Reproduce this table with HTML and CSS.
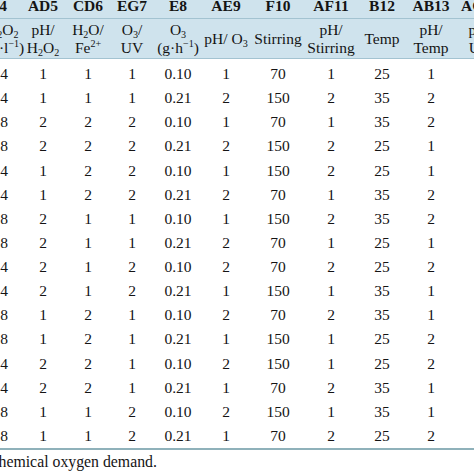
FILE: index.html
```html
<!DOCTYPE html>
<html>
<head>
<meta charset="utf-8">
<link rel="stylesheet" href="styles.css">
</head>
<body>
<table class="doe">
  <colgroup>
    <col class="w0"><col class="w1"><col class="w2"><col class="w3"><col class="w4"><col class="w5"><col class="w6"><col class="w7"><col class="w8"><col class="w9"><col class="w10">
  </colgroup>
  <thead>
    <tr class="r1">
      <th class="c0"><span class="e0">D4</span></th>
      <th>AD5</th><th>CD6</th><th>EG7</th><th>E8</th><th>AE9</th><th>F10</th><th>AF11</th><th>B12</th><th>AB13</th><th>AC14</th>
    </tr>
    <tr class="r2">
      <th class="c0"><span class="e1">H<sub>2</sub>O<sub>2</sub></span><span class="e2">(g·l<sup>−1</sup>)</span></th>
      <th>pH/<br>H<sub>2</sub>O<sub>2</sub></th>
      <th>H<sub>2</sub>O/<br>Fe<sup>2+</sup></th>
      <th>O<sub>3</sub>/<br>UV</th>
      <th>O<sub>3</sub><br>(g·h<sup>−1</sup>)</th>
      <th>pH/ O<sub>3</sub></th>
      <th>Stirring</th>
      <th>pH/<br>Stirring</th>
      <th>Temp</th>
      <th>pH/<br>Temp</th>
      <th>pH/<br>UV</th>
    </tr>
  </thead>
  <tbody>
    <tr><td class="c0">4</td><td>1</td><td>1</td><td>1</td><td>0.10</td><td>1</td><td>70</td><td>1</td><td>25</td><td>1</td><td></td></tr>
    <tr><td class="c0">4</td><td>1</td><td>1</td><td>1</td><td>0.21</td><td>2</td><td>150</td><td>2</td><td>35</td><td>2</td><td></td></tr>
    <tr><td class="c0">8</td><td>2</td><td>2</td><td>2</td><td>0.10</td><td>1</td><td>70</td><td>1</td><td>35</td><td>2</td><td></td></tr>
    <tr><td class="c0">8</td><td>2</td><td>2</td><td>2</td><td>0.21</td><td>2</td><td>150</td><td>2</td><td>25</td><td>1</td><td></td></tr>
    <tr><td class="c0">4</td><td>1</td><td>2</td><td>2</td><td>0.10</td><td>1</td><td>150</td><td>2</td><td>25</td><td>1</td><td></td></tr>
    <tr><td class="c0">4</td><td>1</td><td>2</td><td>2</td><td>0.21</td><td>2</td><td>70</td><td>1</td><td>35</td><td>2</td><td></td></tr>
    <tr><td class="c0">8</td><td>2</td><td>1</td><td>1</td><td>0.10</td><td>1</td><td>150</td><td>2</td><td>35</td><td>2</td><td></td></tr>
    <tr><td class="c0">8</td><td>2</td><td>1</td><td>1</td><td>0.21</td><td>2</td><td>70</td><td>1</td><td>25</td><td>1</td><td></td></tr>
    <tr><td class="c0">4</td><td>2</td><td>1</td><td>2</td><td>0.10</td><td>2</td><td>70</td><td>2</td><td>25</td><td>2</td><td></td></tr>
    <tr><td class="c0">4</td><td>2</td><td>1</td><td>2</td><td>0.21</td><td>1</td><td>150</td><td>1</td><td>35</td><td>1</td><td></td></tr>
    <tr><td class="c0">8</td><td>1</td><td>2</td><td>1</td><td>0.10</td><td>2</td><td>70</td><td>2</td><td>35</td><td>1</td><td></td></tr>
    <tr><td class="c0">8</td><td>1</td><td>2</td><td>1</td><td>0.21</td><td>1</td><td>150</td><td>1</td><td>25</td><td>2</td><td></td></tr>
    <tr><td class="c0">4</td><td>2</td><td>2</td><td>1</td><td>0.10</td><td>2</td><td>150</td><td>1</td><td>25</td><td>2</td><td></td></tr>
    <tr><td class="c0">4</td><td>2</td><td>2</td><td>1</td><td>0.21</td><td>1</td><td>70</td><td>2</td><td>35</td><td>1</td><td></td></tr>
    <tr><td class="c0">8</td><td>1</td><td>1</td><td>2</td><td>0.10</td><td>2</td><td>150</td><td>1</td><td>35</td><td>1</td><td></td></tr>
    <tr class="last"><td class="c0">8</td><td>1</td><td>1</td><td>2</td><td>0.21</td><td>1</td><td>70</td><td>2</td><td>25</td><td>2</td><td></td></tr>
  </tbody>
</table>
<div class="note">Chemical oxygen demand.</div>
</body>
</html>
```

FILE: styles.css
```css
html, body {
  margin: 0;
  padding: 0;
  overflow: hidden;
  background: #ffffff;
}
body {
  width: 474px;
  height: 474px;
  font-family: "Liberation Serif", "Times New Roman", serif;
  font-size: 15.5px;
  color: #141414;
}
.doe {
  border-collapse: separate;
  border-spacing: 0;
  table-layout: fixed;
  width: 521px;
  margin: -7px 0 0 -14px;
}
.w0 { width: 35px; }
.w1 { width: 44px; }
.w2 { width: 46px; }
.w3 { width: 42px; }
.w4 { width: 50px; }
.w5 { width: 46px; }
.w6 { width: 58px; }
.w7 { width: 48px; }
.w8 { width: 54px; }
.w9 { width: 44px; }
.w10 { width: 54px; }

.doe th, .doe td {
  padding: 0;
  text-align: center;
  vertical-align: middle;
  white-space: nowrap;
  line-height: 18px;
}
.doe thead th {
  background: #cfe3ed;
}
.doe .r1 th {
  height: 25px;
  font-weight: bold;
  border-bottom: 1px solid #a3c3d1;
}
.doe .r2 th {
  height: 39px;
  font-weight: normal;
  border-bottom: 1px solid #a3c3d1;
}
.doe td {
  height: 24.13px;
}
.doe tbody tr:first-child td {
  padding-top: 3px;
}
.doe .last td {
  border-bottom: 2px solid #8fb1ba;
}
.doe .c0 {
  text-align: right;
  padding-right: 13px;
}
.doe th.c0 {
  padding-right: 0;
}
.e0, .e1, .e2 {
  display: block;
}
.e0 { padding-right: 14px; }
.e1 { padding-right: 10px; }
.e2 { padding-right: 3px; }
sub, sup {
  font-size: 65%;
  line-height: 0;
}
sub { vertical-align: -0.25em; }
sup { vertical-align: 0.55em; }
.note {
  margin: 3px 0 0 -12px;
  font-size: 15.8px;
  line-height: 18px;
  white-space: nowrap;
}
```
